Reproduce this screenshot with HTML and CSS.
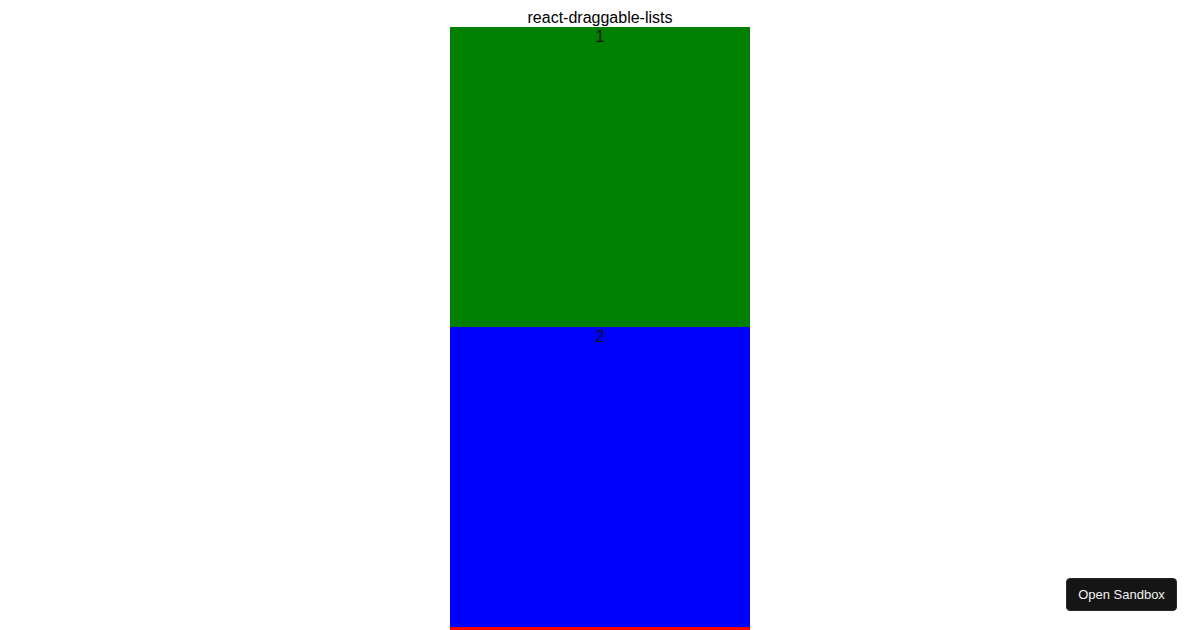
FILE: index.html
```html
<!DOCTYPE html>
<html lang="en">
<head>
    <meta charset="UTF-8">
    <meta name="viewport" content="width=device-width, initial-scale=1.0">
    <title>react-draggable-lists</title>
    <link rel="stylesheet" href="styles.css">
</head>
<body>
    <div class="app">
        <h1 class="app-title">react-draggable-lists</h1>
        <ul class="draggable-list">
            <li class="list-item item-green">1</li>
            <li class="list-item item-blue">2</li>
            <li class="list-item item-red">3</li>
        </ul>
    </div>

    <a class="sandbox-btn" href="#">Open Sandbox</a>
</body>
</html>
```

FILE: styles.css
```css
html,
body {
    overflow: hidden;
}

body {
    margin: 8px;
    font-family: "Liberation Sans", Arial, sans-serif;
    color: #000;
    background: #fff;
}

.app {
    display: flex;
    flex-direction: column;
    align-items: center;
    text-align: center;
}

.app-title {
    margin: 0;
    font-size: 16px;
    font-weight: normal;
    line-height: 19px;
}

.draggable-list {
    list-style: none;
    margin: 0;
    padding: 0;
    width: 300px;
}

.list-item {
    height: 300px;
    font-size: 16px;
    line-height: 19px;
    color: #111;
}

.item-green {
    background: #008000;
}

.item-blue {
    background: #0000ff;
}

.item-red {
    background: #ff0000;
}

.sandbox-btn {
    position: fixed;
    right: 23px;
    bottom: 19px;
    display: flex;
    align-items: center;
    justify-content: center;
    width: 111px;
    height: 33px;
    box-sizing: border-box;
    background: #151515;
    border: 1px solid #2a2a2a;
    border-radius: 4px;
    color: #f2f2f2;
    font-family: "Liberation Sans", Arial, sans-serif;
    font-size: 13px;
    text-decoration: none;
}
```
